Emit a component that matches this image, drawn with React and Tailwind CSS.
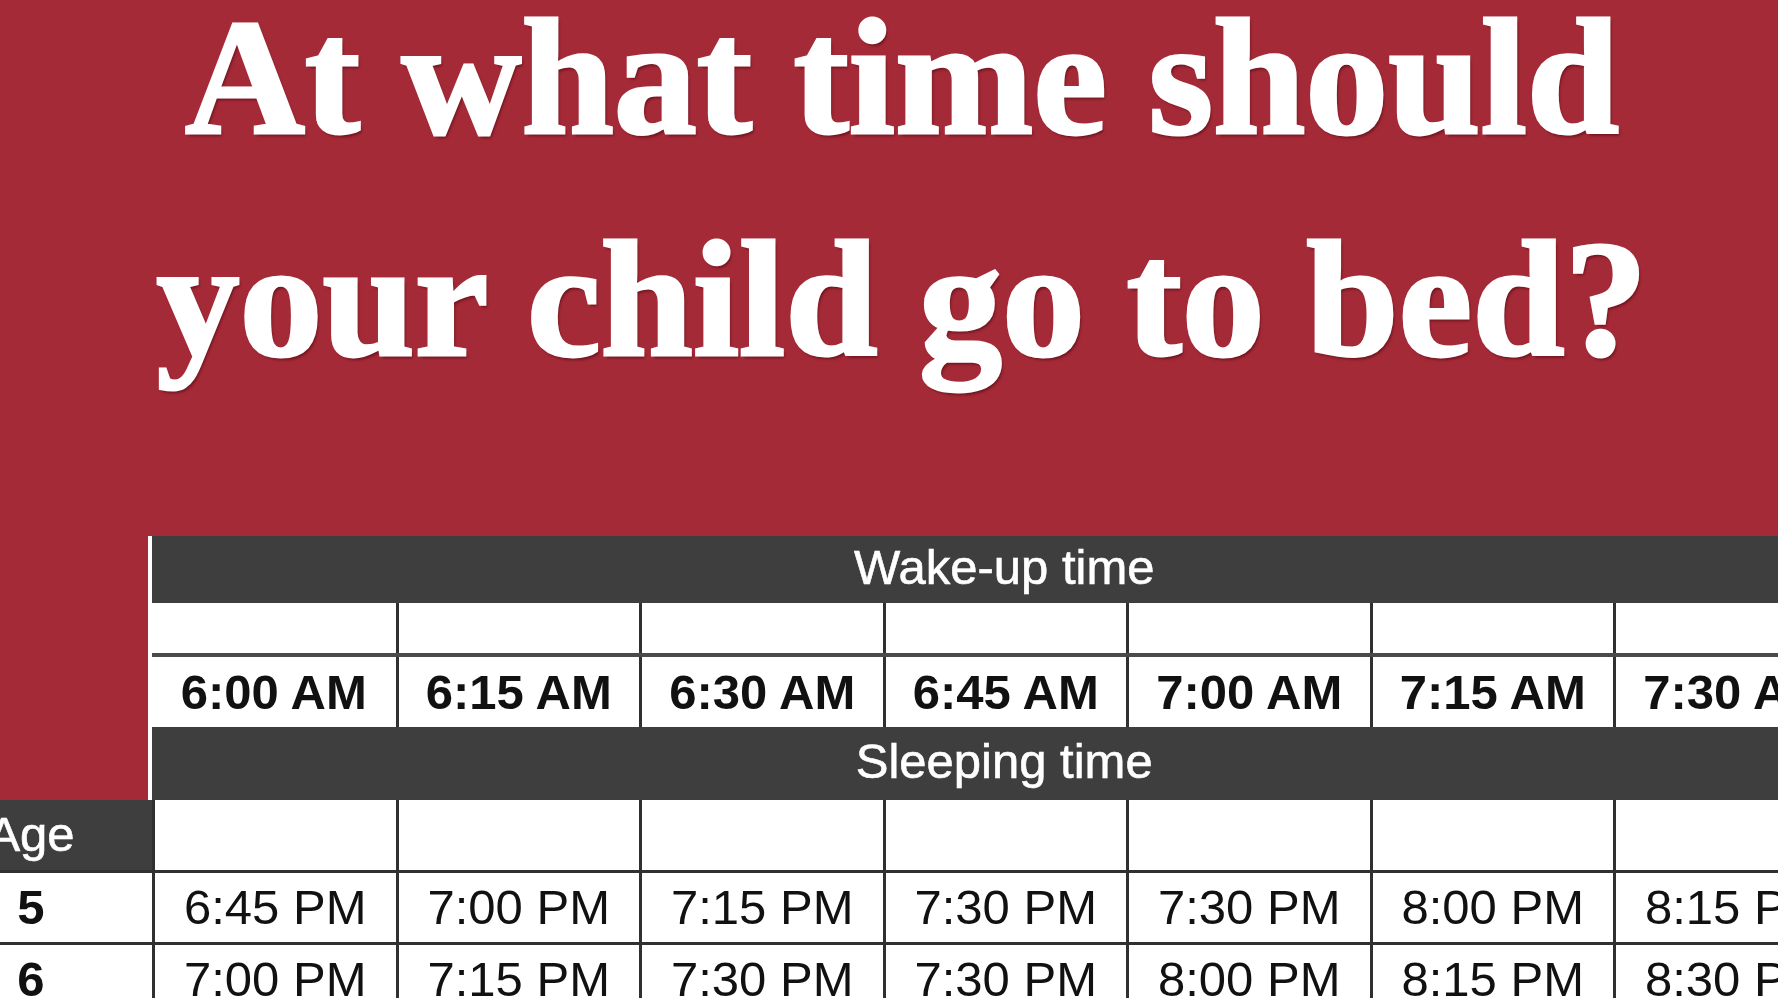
import React from 'react';

const wakeTimes = ['6:00 AM', '6:15 AM', '6:30 AM', '6:45 AM', '7:00 AM', '7:15 AM', '7:30 AM'];

const rows = [
  { age: '5', times: ['6:45 PM', '7:00 PM', '7:15 PM', '7:30 PM', '7:30 PM', '8:00 PM', '8:15 PM'] },
  { age: '6', times: ['7:00 PM', '7:15 PM', '7:30 PM', '7:30 PM', '8:00 PM', '8:15 PM', '8:30 PM'] },
];

const sans = "font-['Liberation_Sans',Arial,Helvetica,sans-serif]";

const Cell = ({ first, bold, children }) => (
  <div
    className={
      'w-[243.5px] shrink-0 h-full bg-white flex items-center justify-center text-[49px] leading-none text-[#111] ' +
      (first ? '' : 'border-l-[3px] border-[#303030] ') +
      (bold ? 'font-bold' : 'font-normal')
    }
  >
    {children}
  </div>
);

const BandHeader = ({ label, height }) => (
  <div className={`${height} bg-[#3e3e3e] flex items-center justify-center text-white text-[49px] leading-none pb-[4px] [-webkit-text-stroke:0.6px_#fff]`}>
    {label}
  </div>
);

const App = () => {
  return (
    <div className={`w-full h-[998px] overflow-hidden bg-[#a52a37] ${sans}`}>
      {/* title */}
      <div className="pl-[26px] text-center text-white font-['Liberation_Serif','Times_New_Roman',serif] font-bold text-[166px] leading-[150px] whitespace-nowrap [text-shadow:2px_3px_3px_rgba(60,0,10,0.55)] [-webkit-text-stroke:3px_#fff]">
        <div className="mt-[2px]">At what time should</div>
        <div className="mt-[72px]">your child go to bed?</div>
      </div>

      {/* chart */}
      <div className="ml-[-90px] mt-[162px] w-[1946.5px]">
        <div className="flex">
          <div className="w-[242px] h-[264px] shrink-0 border-r-4 border-white" />
          <div className="flex-1 flex flex-col">
            <BandHeader label="Wake-up time" height="h-[67px]" />
            <div className="h-[50px] flex">
              {wakeTimes.map((t, i) => (
                <Cell key={t} first={i === 0} />
              ))}
            </div>
            <div className="h-[4px] bg-[#4a4a4a]" />
            <div className="h-[70px] flex">
              {wakeTimes.map((t, i) => (
                <Cell key={t} first={i === 0} bold>
                  {t}
                </Cell>
              ))}
            </div>
            <BandHeader label="Sleeping time" height="h-[73px]" />
          </div>
        </div>

        <div className="h-[73px] flex border-b-[3px] border-[#303030]">
          <div className="w-[242px] shrink-0 h-full bg-[#3e3e3e] flex items-center justify-center text-white text-[49px] leading-none pb-[2px] [-webkit-text-stroke:0.6px_#fff]">
            Age
          </div>
          {wakeTimes.map((t) => (
            <Cell key={t} />
          ))}
        </div>

        {rows.map((r) => (
          <div key={r.age} className="h-[72px] flex border-b-[3px] border-[#303030]">
            <div className="w-[242px] shrink-0 h-full bg-white flex items-center justify-center text-[49px] leading-none font-bold text-[#111]">
              {r.age}
            </div>
            {r.times.map((t, i) => (
              <Cell key={i}>{t}</Cell>
            ))}
          </div>
        ))}
      </div>
    </div>
  );
};

export default App;
